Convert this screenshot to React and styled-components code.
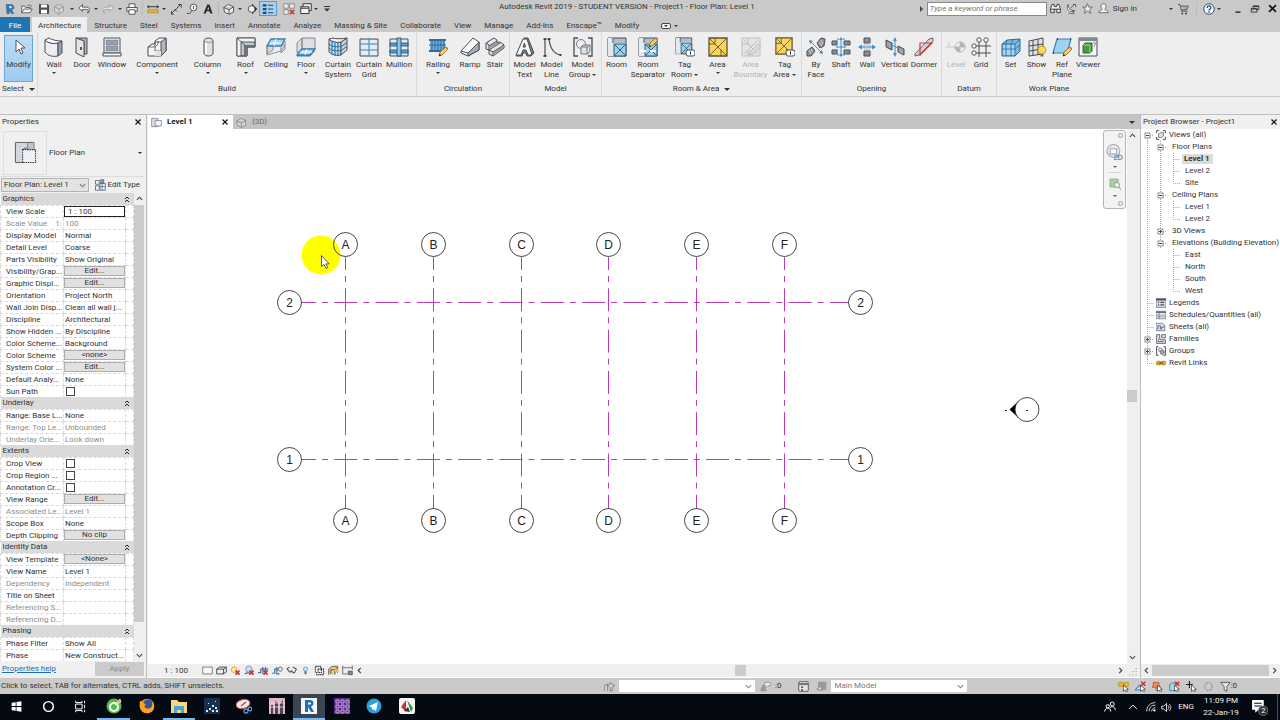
import React, { useState } from "react"
import styled, { createGlobalStyle } from "styled-components"

const GlobalStyle = createGlobalStyle`
  * {
    box-sizing: border-box;
  }
  body {
    margin: 0;
    background: #cacaca;
    color: #333;
    font-family: Roboto, "Open Sans", sans-serif;
    font-size: 8px;
    line-height: 10px;
  }
  button, input, select {
    font: inherit;
    color: inherit;
    margin: 0;
    padding: 0;
    border: 0;
    border-radius: 0;
    background: none;
    appearance: none;
    outline: none;
  }
  button {
    cursor: pointer;
  }
  svg {
    display: block;
    flex: none;
  }
`

const ink = "#4a4e55"
const blue = "#3b7fb5"
const sky = "#a8d4ee"
const gold = "#fbd45c"

/* ---------- icons ---------- */

const ribbonIcons = {
  modify: <path d="M7 3v12l3-3 2 5 2-1-2-5h4z" fill="#fff" stroke="#444" strokeWidth=".9" />,
  wall: (
    <>
      <path d="M1 3c3 3 8 4 13 3v13c-5 1-10 0-13-4z" fill="#eceef1" stroke={ink} />
      <path d="M1 3l4-2c3 2 8 3 13 3l-4 2c-5 1-10 0-13-3z" fill="#fff" stroke={ink} />
      <path d="M14 6l4-2v12l-4 3z" fill="#9ba1ab" stroke={ink} />
    </>
  ),
  door: (
    <>
      <path d="M4 1h11v16h-3V4z" fill="#aeb4bd" stroke={ink} />
      <path d="M4 1l8 3v16l-8-4z" fill="#e2e5ea" stroke={ink} />
      <path d="M9 10v3" stroke="#222" strokeWidth="1.500" />
    </>
  ),
  window: (
    <>
      <path d="M2 1h16v15H2z" fill="#f6f7f8" stroke={ink} />
      <path d="M4 3h5.500v5H4zM10.500 3H16v5h-5.500zM4 9h5.500v5H4zM10.500 9H16v5h-5.500z" fill="#98a1ad" stroke="#6e7681" strokeWidth=".6" />
      <path d="M1 16h18v3H1z" fill="#f6f7f8" stroke={ink} />
    </>
  ),
  component: (
    <>
      <path d="M1 10l4-3h3V4l4-3h7v13l-5 5H1z" fill="#f4f5f7" stroke={ink} />
      <path d="M14 5l5-4v13l-5 5z" fill="#b1b6be" stroke={ink} />
      <path d="M8 5h6M8 5v5M1 10h7l3-3M8 10v4h6M11 4v3" fill="none" stroke={ink} strokeWidth=".8" />
      <path d="M8 14h6v5H8z" fill="#dfe2e6" />
    </>
  ),
  column: (
    <>
      <path d="M6 4c0-4 9-4 9 0v12c0 4-9 4-9 0z" fill="#dde0e4" stroke={ink} />
      <path d="M8 5v12" stroke="#fff" strokeWidth="2" />
      <path d="M6.500 4c1 2 7 2 8 0" fill="none" stroke="#8e949d" />
    </>
  ),
  roof: (
    <>
      <path d="M1 1h18v9h-8v9H1z" fill="#c4c8ce" stroke={ink} />
      <path d="M1 1l4 4h14V1zM5 5v14H1V1z" fill="#f2f3f5" />
      <path d="M19 5H5v14M19 1H1v18h10v-9h8zM1 1l10 9" fill="none" stroke={ink} strokeWidth=".9" />
      <path d="M8 8h11v2h-8v9H8z" fill="#6c727c" />
    </>
  ),
  ceiling: (
    <>
      <path d="M1 8v9l6-4V8h12l-4 5v3l4-4V4z" fill="#d3d6db" stroke="#8b9098" />
      <path d="M5 2h14l-4 7H1z" fill={sky} stroke={blue} strokeWidth="1.300" />
      <path d="M4 6h12M10 2L8 9" stroke="#fff" />
      <path d="M1 9v9l14-4V9" fill="none" stroke="#8b9098" />
    </>
  ),
  floor: (
    <>
      <path d="M6 1h13v11H6zM1 6l5-5v11l-5 4z" fill="#dcdfe3" stroke="#858b94" />
      <path d="M6 12h13l-5 6H1z" fill={sky} stroke={blue} strokeWidth="1.300" />
      <path d="M4 15h12M11 12l-2 6" stroke="#fff" />
      <path d="M1 18h13l5-6v2l-5 5.500H1z" fill={blue} />
    </>
  ),
  curtainSystem: (
    <>
      <path d="M1 2c3 3 8 4 12 3v13c-4 1-9 0-12-3z" fill="#bfe0f3" stroke={ink} />
      <path d="M13 5l6-4v12l-6 5z" fill="#cfd3d9" stroke={ink} />
      <path d="M1 2l4-1c3 1 9 1 14 0l-6 4C9 6 4 5 1 2z" fill="#f2f3f5" stroke={ink} />
      <path d="M4 4.500v13M7 5.500V19M10 5.500V19M1 7c3 3 8 3 12 2.500l6-4M1 11c3 3 8 3 12 2.500l6-4" fill="none" stroke="#2d6796" />
    </>
  ),
  curtainGrid: (
    <>
      <path d="M1 2h18v17H1z" fill="#d7dadf" stroke={ink} />
      <path d="M2 3h7v3H2zM11 3h7v3h-7zM2 14h7v4H2zM11 14h7v4h-7zM2 8h7v4H2zM11 8h7v4h-7z" fill="#e9ebee" />
      <path d="M10 1v18M1 7h18M1 13h18" stroke="#3f94cf" />
    </>
  ),
  mullion: (
    <>
      <path d="M1 2h18v17H1z" fill="#e7e9ec" stroke={ink} />
      <path d="M1 6h18v3H1zM1 13h18v3H1z" fill="#56a0d3" stroke="#1f5278" strokeWidth=".8" />
      <path d="M8 1h4v18H8z" fill="#8ec3e8" stroke="#1f5278" strokeWidth=".9" />
    </>
  ),
  railing: (
    <>
      <path d="M1 2h17v2H1zM1 13h14v2H1z" fill="#2f6fa3" />
      <path d="M2 4h15v9H2z" fill="#6db1de" />
      <path d="M4 4v10M7 4v10M10 4v10M13 4v10M16 4v8M1 8h17" stroke="#2c6897" />
      <Pencil />
    </>
  ),
  ramp: (
    <>
      <path d="M1 14L13 1l6 4v8l-11 6-7-3z" fill="#f7f8f9" stroke={ink} />
      <path d="M19 5v8L8 19v-3z" fill="#a8aeb7" stroke={ink} />
      <path d="M1 14l7 2" stroke={ink} />
    </>
  ),
  stair: (
    <>
      <path d="M1 6l8-5 3 2v3l3-1 4 3v3L8 19l-4-2v-4l-3-1z" fill="#e3e5e9" stroke={ink} />
      <path d="M4 9l8-5M4 13l11-7M8 15l11-7M1 6l3 2v5l4 2v4" fill="none" stroke={ink} />
      <path d="M5 9l7-4v2L5 11zM9 15l9-6v2l-9 6z" fill="#8c939e" />
    </>
  ),
  modelText: (
    <>
      <path d="M9 1h4l6 15-3 3h-4l-1-3H8l-1 3H1z" fill="#7a808b" stroke={ink} />
      <path d="M8 2h4l5 16h-4l-2-5H8l-2 5H1z" fill="#f5f6f7" stroke={ink} />
      <path d="M8 10l1.500-4 1 4z" fill="#7a808b" stroke={ink} />
    </>
  ),
  modelLine: (
    <>
      <path d="M3 2v17M7 2c1 9 5 15 12 16" fill="none" stroke={ink} strokeWidth="1.200" />
      <path d="M1.500 2h3M1.500 19h3M5.500 2h3M17.500 18h2" stroke="#222" strokeWidth="1.500" />
    </>
  ),
  modelGroup: (
    <>
      <path d="M5 1H1v18h4M15 1h4v18h-4" fill="none" stroke={ink} strokeWidth="1.300" />
      <circle cx="8" cy="7" r="4.500" fill="#eef0f2" stroke="#737983" />
      <path d="M8 10l2-2h7v6l-2 3H8z" fill="#dfe2e6" stroke="#737983" />
      <path d="M8 10h6v7M14 10l3-2" fill="none" stroke="#737983" />
    </>
  ),
  room: <RoomBase />,
  roomSeparator: (
    <>
      <RoomBase />
      <path d="M2 14h6M12 14h6" stroke="#fff" strokeWidth="2" />
      <g transform="translate(0 -9)">
        <Pencil />
      </g>
    </>
  ),
  tagRoom: (
    <>
      <g transform="scale(.88)">
        <RoomBase />
      </g>
      <Tag />
    </>
  ),
  area: <AreaBase />,
  areaBoundary: (
    <g opacity=".55">
      <path d="M1 1h18v18H1z" fill="#dcdcdc" stroke="#999" />
      <path d="M3 3l14 14M17 3L3 17M7 1v6H1M7 13v6" fill="none" stroke="#999" />
      <path d="M9 15l8-8 3 2-8 8-4 1z" fill="#ccc" stroke="#999" />
    </g>
  ),
  tagArea: (
    <>
      <g transform="scale(.9)">
        <AreaBase />
      </g>
      <Tag />
    </>
  ),
  byFace: (
    <>
      <path d="M11 6l4-5 4 1-1 7-4 2zM1 14l5-4 3 4-4 5H1z" fill="#8a8f98" stroke={ink} />
      <path d="M13 5l3 4M15 3l2 4M3 13l2 4M5 12l2 3" stroke="#d5d8dd" />
      <path d="M4 4l12 12" stroke="#3f8fd0" />
      <path d="M3 3l4 1-3 3zM17 17l-4-1 3-3z" fill="#3f8fd0" />
    </>
  ),
  shaft: (
    <>
      <path d="M1 4h5v4H1zM13 4h6v4h-6zM1 13h5v4H1zM13 13h6v4h-6z" fill="#8a8f98" stroke={ink} />
      <path d="M6 10h8M10 1v18" stroke="#3f8fd0" />
      <path d="M6 2h8v16H6z" fill="none" stroke="#3f8fd0" strokeDasharray="2 1" />
      <path d="M10 0l2 3H8zM10 20l2-3H8z" fill="#3f8fd0" />
    </>
  ),
  wallOpening: (
    <>
      <path d="M7 1h6v5H7zM7 14h6v5H7z" fill="#8a8f98" stroke={ink} />
      <path d="M7 8h6v4H7z" fill="#e9ebee" stroke="#aaa" strokeWidth=".6" />
      <path d="M3 10h14" stroke="#3f8fd0" />
      <path d="M1 10l4-2.500v5zM19 10l-4-2.500v5z" fill="#3f8fd0" />
    </>
  ),
  vertical: (
    <>
      <path d="M1 3l6 3v7l-6-3zM13 9l6 3v6l-6-3z" fill="#8a8f98" stroke={ink} />
      <path d="M3 5v5M5 6v5M15 11v5M17 12v5" stroke="#c7cad0" strokeWidth=".7" />
      <path d="M10 3v14M7 8l6 3" stroke="#3f8fd0" />
      <path d="M10 0l2 4H8zM10 20l2-4H8z" fill="#3f8fd0" />
    </>
  ),
  dormer: (
    <>
      <path d="M1 17L15 2l4-1v3L5 18l-4 1z" fill="#d0d3d8" stroke={ink} strokeWidth=".8" />
      <path d="M6 19V6h12L6 18" fill="none" stroke="#cc3b3b" strokeWidth="1.200" />
    </>
  ),
  level: (
    <g opacity=".5">
      <circle cx="14" cy="10" r="5" fill="#eee" stroke="#888" />
      <path d="M14 10V5a5 5 0 0 1 5 5zM14 10v5a5 5 0 0 1-5-5z" fill="#777" />
      <path d="M0 10h20M14 4v12M3 9V5" stroke="#888" strokeWidth=".8" />
    </g>
  ),
  grid: (
    <>
      <path d="M8 5v15M15 5v15M5 9h15M5 16h15" stroke={ink} />
      <g fill="#fff" stroke={ink}>
        <circle cx="8" cy="3" r="2.200" />
        <circle cx="15" cy="3" r="2.200" />
        <circle cx="3" cy="9" r="2.200" />
        <circle cx="3" cy="16" r="2.200" />
      </g>
    </>
  ),
  set: (
    <>
      <path d="M1 7l5-4 13-1v12l-5 5H1z" fill="#7db8e0" stroke="#23699d" />
      <path d="M2 8h12v10H2z" fill="#a9d4f0" />
      <path d="M1 7h13l5-5M1 12h13l5-4M5 7v12M10 7v12M14 7v12M6 3l-1 4M12 3l-2 4" fill="none" stroke="#23699d" strokeWidth=".8" />
    </>
  ),
  show: (
    <>
      <path d="M2 4l14-3v16L2 19z" fill="#dfe2e6" stroke={ink} />
      <path d="M6 3v16M11 2v16M2 9l14-2M2 14l14-2" stroke={ink} />
      <circle cx="15" cy="13" r="4" fill="#fbd84e" stroke="#b98c14" strokeWidth=".7" />
      <path d="M13.500 17h3v2.500h-3z" fill="#6d7178" />
    </>
  ),
  refPlane: (
    <>
      <path d="M5 2h14l-4 14H1z" fill="#a3d2f0" stroke={blue} strokeWidth="1.200" />
      <path d="M5 2h1M18 2h1M1 16h1" stroke="#1c4f78" strokeWidth="2" />
      <Pencil />
    </>
  ),
  viewer: (
    <>
      <path d="M1 1h18v18H1z" fill="#f5f6f7" stroke={ink} />
      <path d="M1 1h18v3H1z" fill="#838993" />
      <path d="M5 8l2-2h7v8l-2 2H5z" fill="#4f9a45" stroke="#2e6b27" />
      <path d="M5 8h7v8" fill="none" stroke="#9fd193" />
      <path d="M16 3v4M18 5l-2 5" stroke="#999" />
    </>
  ),
}

function Pencil() {
  return (
    <>
      <path d="M11 19l1-4 6-5 2 2-6 6z" fill={gold} stroke="#8c5a14" strokeWidth=".8" />
      <path d="M11 19l.6-2.200 1.600 1.400z" fill="#222" />
      <path d="M17 10.500l1-1 2.500 2-1 1z" fill="#d9665c" />
    </>
  )
}

function RoomBase() {
  return (
    <>
      <path d="M1 1h18v18H1z" fill="#b9bec6" stroke={ink} />
      <path d="M1 1h5v5h13v1H7v12H1z" fill="#e6e8eb" />
      <path d="M7 7h12v12H7z" fill="#9ed0ec" stroke="#315d7c" />
      <path d="M7 7l12 12M19 7L7 19M6 1v5" stroke="#315d7c" />
    </>
  )
}

function AreaBase() {
  return (
    <>
      <path d="M1 1h18v18H1z" fill={gold} stroke="#5d5230" strokeWidth="1.300" />
      <path d="M1 1l18 18M19 1L1 19M7 1v6H1M13 19v-6" fill="none" stroke="#5d5230" strokeWidth=".9" />
    </>
  )
}

function Tag() {
  return (
    <>
      <rect x="11" y="13" width="9" height="6" rx="2" fill="#fff" stroke={ink} />
      <path d="M15.500 14.500v3" stroke="#222" />
    </>
  )
}

const smallIcons = {
  logo: (
    <>
      <path d="M3 2h6c6 0 5 7 1 7l3 5h-3L7 9v5H4z" fill="#2e7dba" stroke="#1b5688" strokeWidth=".7" />
      <path d="M7 4h2c2 0 2 3 0 3H7z" fill="#d9e9f5" />
    </>
  ),
  open: <path d="M1 13V4h4l1 2h6v2M1 13l3-5h11l-3 5zM9 3h4l1 2" fill="#f2f2f2" stroke="#444" />,
  save: (
    <>
      <path d="M2 2h11l1 1v11H2z" fill="#4d5259" stroke="#333" />
      <path d="M4 2h8v4H4zM4 9h8v5H4z" fill="#fff" />
    </>
  ),
  sync: <path d="M2 5l6-3 6 3v6l-6 4-6-4zM2 5l6 3 6-3M8 8v7" fill="#d6d6d6" stroke="#8c8c8c" />,
  undo: <path d="M6 2L1 7l5 4V8.500h5c3 0 3 2 2 5 4-4 2-8-2-8H6z" fill="#fff" stroke="#333" />,
  redo: <path d="M10 2l5 5-5 4V8.500H5c-3 0-3 2-2 5-4-4-2-8 2-8h5z" fill="#e4e4e4" stroke="#999" />,
  print: (
    <>
      <path d="M4 6V1h8v5M4 11H1V6h14v5h-3" fill="#f2f2f2" stroke="#333" />
      <path d="M4 9h8v6H4z" fill="#fff" stroke="#333" />
    </>
  ),
  measure: (
    <>
      <path d="M0 5h16M3 3L1 5l2 2M13 3l2 2-2 2" fill="none" stroke="#333" strokeWidth="1.300" />
      <path d="M1 9h14v4H1z" fill="#e3b23a" stroke="#8a6a17" strokeWidth=".6" />
    </>
  ),
  dimension: <path d="M2 14L14 2M2 11v4h3M11 2h4v4M6 8l3 3" fill="none" stroke="#333" strokeWidth="1.200" />,
  tag: (
    <>
      <circle cx="10" cy="6" r="4.500" fill="#eee" stroke="#333" />
      <path d="M1 14h4l3-4M10 4v4" fill="none" stroke="#333" />
    </>
  ),
  text: <path d="M2 14L7 2h3l4 12h-3l-1-3H6l-1 3zM7 9h2.500L8.500 5z" fill="#2b2b2b" fillRule="evenodd" />,
  house: <path d="M1 6l6-4 7 3v7l-6 3-6-3zM1 6l7 3 6-4M8 9v6" fill="#eee" stroke="#333" />,
  houseGrey: <path d="M1 6l6-4 7 3v7l-6 3-6-3zM1 6l7 3 6-4M8 9v6" fill="#d8d8d8" stroke="#777" />,
  section: (
    <>
      <path d="M8 1l7 7-7 7z" fill="#222" />
      <circle cx="7.500" cy="8" r="4.500" fill="#eee" stroke="#333" />
    </>
  ),
  thin: (
    <>
      <path d="M1 3h5M1 8h5M1 13h5" stroke="#1c4d74" strokeWidth="3" />
      <path d="M8 3h7M8 8h7M8 13h7" stroke="#1c4d74" strokeWidth="1.500" />
    </>
  ),
  closeViews: (
    <>
      <path d="M1 1h6v6H1zM9 1h6v6H9zM1 9h6v6H1z" fill="#ececec" stroke="#777" />
      <path d="M9 9l6 6M15 9l-6 6" stroke="#c22f2f" strokeWidth="2" />
    </>
  ),
  switchViews: <path d="M4 5V1h11v9h-3M1 5h11v9H1zM1 7h11" fill="#f3f3f3" stroke="#333" strokeWidth="1.300" />,
  binoculars: (
    <path d="M1 14V8l2-6h3v3h4V2h3l2 6v6h-5V9H6v5zM1 9h5M10 9h5" fill="#eee" stroke="#333" strokeWidth="1.300" />
  ),
  satellite: <path d="M3 2c0 6 4 9 10 9-3 3-10 2-11-3-.5-2 0-4 1-6zM7 7l6-5M4 15h8l-3-4M10 2h4v4" fill="#eee" stroke="#333" />,
  star: <path d="M8 1l2 5h5l-4 3.500L12.500 15 8 11.500 3.500 15 5 9.500 1 6h5z" fill="#eee" stroke="#444" />,
  user: <path d="M8 1c5 0 4 6 2 8 0 2 5 1 5 5H1c0-4 5-3 5-5C4 7 3 1 8 1z" fill="#f2f2f2" stroke="#444" />,
  cart: (
    <>
      <path d="M1 2h3l2 9h8M4.500 4H15l-2 5H6" fill="#aab" stroke="#445" />
      <circle cx="7" cy="14" r="1.300" fill="#445" />
      <circle cx="12" cy="14" r="1.300" fill="#445" />
    </>
  ),
  help: (
    <>
      <circle cx="8" cy="8" r="7" fill="#f4f6f9" stroke="#2d4f78" strokeWidth="1.300" />
      <path d="M5.500 6.500c0-4 5.500-3 5 0-.3 1.500-2.500 1.500-2.500 3.500M8 11v2" fill="none" stroke="#2d4f78" strokeWidth="1.800" />
    </>
  ),
  minimize: <path d="M4 13h8" stroke="#111" strokeWidth="2" />,
  restore: <path d="M5 6V3h9v6h-3M2 7h9v6H2zM2 8h9M5 4h9" fill="none" stroke="#222" strokeWidth="1.300" />,
  close: <path d="M3 3l10 10M13 3L3 13" stroke="#1a1a1a" strokeWidth="2.600" />,
  plan: (
    <>
      <path d="M1 2h9v12H1z" fill="#dfe3ea" stroke="#67707d" />
      <path d="M6 5h9v8H6z" fill="#f2f4f7" stroke="#67707d" />
    </>
  ),
  planBig: (
    <>
      <path d="M1 1h12v4H7v10H1z" fill="#d2d6dd" stroke="#4b5058" strokeWidth=".6" />
      <path d="M9.500 1H14v5H9.500z" fill="#bfc4cc" stroke="#4b5058" strokeWidth=".4" />
      <path d="M6 6h9v9H6z" fill="#eef0f3" stroke="#333" strokeWidth=".7" strokeDasharray="1 .6" />
    </>
  ),
  editType: (
    <>
      <path d="M2 2h5v5H2zM2 9h5v6H2zM8 6h7v9H8z" fill="#f1f3f5" stroke="#4d545e" />
      <path d="M9 1h4v4H9z" fill="#7fb3d8" stroke="#4d545e" />
      <path d="M8 10h7M11 6v9" stroke="#3c79a8" />
    </>
  ),
  views: (
    <>
      <path d="M1 5V1h4M11 1h4v4M15 11v4h-4M5 15H1v-4" fill="none" stroke="#444" strokeWidth="1.500" />
      <path d="M4 6l4-2h4v6l-3 2H4z" fill="#ddd" stroke="#555" />
    </>
  ),
  legends: (
    <>
      <path d="M0 1h16v14H0z" fill="#d9dbe3" stroke="#4d5360" />
      <path d="M0 1h16v3H0z" fill="#4d5360" />
      <path d="M3 7h2M7 7h6M3 11h2M7 11h6" stroke="#4d5360" strokeWidth="2" />
    </>
  ),
  schedules: (
    <>
      <path d="M0 2h16v12H0z" fill="#fff" stroke="#4d5360" />
      <path d="M0 2h16v3H0z" fill="#6b707c" />
      <path d="M0 8h16M0 11h16M5 5v9" stroke="#4d5360" />
    </>
  ),
  sheets: (
    <>
      <path d="M0 2h10l4 3v9H0z" fill="#dfe1ea" stroke="#4d5360" />
      <path d="M3 12V6h4v6M9 12V8h5" fill="none" stroke="#5d6d96" strokeWidth="1.500" />
    </>
  ),
  families: <path d="M1 1h5v8h9v6H1zM9 1h6v5H9zM4 9v3h8" fill="#dde0e8" stroke="#4a5161" strokeWidth="1.300" />,
  groups: (
    <>
      <path d="M4 1H1v14h3M12 1h3v14h-3" fill="none" stroke="#444" strokeWidth="1.500" />
      <circle cx="7" cy="6" r="3" fill="#dde0e8" stroke="#4a5161" />
      <path d="M7 8l3-2 3 2v4l-3 2-3-2z" fill="#9fa7bd" stroke="#4a5161" />
    </>
  ),
  links: (
    <>
      <rect x="0" y="5" width="8" height="6" rx="3" fill="#e7b43a" stroke="#94690c" />
      <rect x="8" y="5" width="8" height="6" rx="3" fill="#e7b43a" stroke="#94690c" />
      <path d="M4 8h8" stroke="#5d430b" strokeWidth="1.500" />
    </>
  ),
  detail: <path d="M1 3h14v10H1z" fill="#f7f7f7" stroke="#555" />,
  cube: <path d="M1 6l4-3h10v7l-4 3H1zM1 6h10v7M11 6l4-3" fill="#eee" stroke="#333" strokeWidth="1.200" />,
  sun: (
    <>
      <circle cx="6" cy="7" r="4" fill="#ffe9a5" stroke="#d9941b" strokeWidth="1.500" strokeDasharray="2 1" />
      <RedX />
    </>
  ),
  shadow: (
    <>
      <circle cx="7" cy="6" r="4.500" fill="#cfe4f3" stroke="#477a9f" />
      <path d="M1 13c3-2 6-2 9 0" fill="none" stroke="#477a9f" strokeWidth="2" />
      <RedX />
    </>
  ),
  crop: (
    <>
      <path d="M0 11h4V6h11M7 3v10M11 3v8" fill="none" stroke="#4378a5" strokeWidth="1.800" />
      <RedX />
    </>
  ),
  cropRegion: (
    <>
      <path d="M0 12h4V6h5M7 3v10h4" fill="none" stroke="#4378a5" strokeWidth="1.800" />
      <circle cx="12" cy="6" r="3" fill="#e9f4fb" stroke="#333" />
    </>
  ),
  glasses: <path d="M1 5l4 5c2 1 3-1 3-2 1 3 4 5 5 2l2-4-5-3M5 3L2 5" fill="none" stroke="#4a4a4a" strokeWidth="1.500" />,
  bulb: (
    <>
      <circle cx="8" cy="6" r="3" fill="#cfe9fa" stroke="#3b86bd" />
      <path d="M6.500 9h3v3l-1.500 2-1.500-2z" fill="#4e7795" />
    </>
  ),
  temp: <path d="M2 2h8v4h4v8H4v-3H2zM6 6h5v5H6z" fill="#eee" stroke="#333" strokeWidth="1.500" strokeDasharray="2 1" />,
  analytic: (
    <>
      <path d="M1 14V6l5-4h8v9M4 13V7h6v7M10 7l4-4" fill="#e6c9a1" stroke="#554" strokeWidth="1.300" />
      <circle cx="12" cy="8" r="3" fill="#f6b73c" />
    </>
  ),
  constraints: (
    <>
      <path d="M1 1v12M15 1v6M1 4h14M1 13h7" stroke="#666" strokeWidth="1.300" fill="none" />
      <path d="M9 9h6v5H9z" fill="#888" stroke="#444" />
    </>
  ),
  worksets: <path d="M1 14V7l4-2v9M5 9l4-6 6 4-3 2v5H9V8" fill="#ddd" stroke="#888" strokeWidth="1.500" />,
  editable: (
    <>
      <path d="M7 2h8v5h-4l-3 3V7H7z" fill="#eee" stroke="#888" />
      <path d="M1 14l2-5h3l3 5z" fill="#999" stroke="#888" />
      <circle cx="5" cy="7" r="2" fill="#999" />
    </>
  ),
  options: (
    <>
      <rect x="1" y="1" width="14" height="14" rx="2" fill="#e3e3e3" stroke="#555" strokeWidth="1.300" />
      <path d="M1 3h14v3H1z" fill="#777" />
      <path d="M6 8v2M6 12v2" stroke="#111" strokeWidth="2" />
    </>
  ),
  addOption: (
    <>
      <path d="M3 1h12v12H3z" fill="#9a9a9a" />
      <path d="M1 12l6-5 2 7z" fill="#d5d5d5" stroke="#777" />
    </>
  ),
  selLinks: (
    <>
      <rect x="0" y="2" width="8" height="6" rx="3" fill="#e8b62f" stroke="#b5850f" />
      <rect x="8" y="2" width="8" height="6" rx="3" fill="#e8b62f" stroke="#b5850f" />
      <Pointer />
    </>
  ),
  selUnderlay: (
    <>
      <path d="M0 13l7-7 4 7z" fill="#cfe4f3" stroke="#3b7fb5" strokeWidth="1.500" />
      <path d="M9 1l6 6M15 1L9 7" stroke="#cc2b2b" strokeWidth="2" />
      <Pointer />
    </>
  ),
  selPinned: (
    <>
      <path d="M2 2h8v3l2 4H0l2-4zM6 9v5" fill="#ef8f5d" stroke="#b5552a" strokeWidth="1.300" />
      <Pointer />
    </>
  ),
  selFace: (
    <>
      <path d="M1 5l3-2h6v11H1z" fill="#a8d4ee" stroke="#3b7fb5" strokeWidth="1.300" />
      <path d="M9 1l6 6M15 1L9 7" stroke="#cc2b2b" strokeWidth="2" />
      <Pointer />
    </>
  ),
  drag: (
    <>
      <path d="M5 0v10M0 5h10" stroke="#222" strokeWidth="1.600" />
      <Pointer />
    </>
  ),
  ring: <circle cx="8" cy="8" r="5.500" fill="none" stroke="#a5a5a5" strokeWidth="2.500" strokeDasharray="3 1.300" />,
  filter: <path d="M1 2h14L10 8v7l-4-2V8z" fill="#e8ebee" stroke="#3e444c" strokeWidth="1.200" />,
  grip: <path d="M13 3v2M13 8v2M13 13v2M8 8v2M8 13v2M3 13v2" stroke="#aaa" strokeWidth="2" />,
}

function RedX() {
  return <path d="M8 8l6 6M14 8l-6 6" stroke="#c62f2f" strokeWidth="2.400" />
}

function Pointer() {
  return <path d="M8 6v9l2-2 2 3 2-1-2-3h3z" fill="#fff" stroke="#333" />
}

const Icon = ({ name, size = 11 }) => (
  <svg width={size} height={size} viewBox="0 0 16 16" aria-hidden="true">
    {smallIcons[name]}
  </svg>
)

const Caret = styled.span`
  width: 0;
  height: 0;
  margin-right: ${(p) => p.$after || 0}px;
  border: ${(p) => p.$size || 2}px solid transparent;
  border-top-color: #333;
  border-bottom-width: 0;
`

const Chevron = ({ dir = "down", color = "#444" }) => {
  const d = {
    down: "M1 2.500l3 3 3-3",
    up: "M1 5.500l3-3 3 3",
    left: "M5.500 1l-3 3 3 3",
    right: "M2.500 1l3 3-3 3",
  }[dir]
  return (
    <svg width="7" height="7" viewBox="0 0 8 8" aria-hidden="true">
      <path d={d} fill="none" stroke={color} strokeWidth="1.300" />
    </svg>
  )
}

/* ---------- shell ---------- */

const Shell = styled.div`
  min-height: 100vh;
  display: flex;
  flex-direction: column;
`

const TitleBar = styled.header`
  display: grid;
  grid-template-columns: auto 1fr auto;
  align-items: center;
  height: 17px;
  background: #c9c9c9;
`
const QuickAccess = styled.div`
  display: flex;
  align-items: center;
  padding-left: 2px;
`
const QuickButton = styled.button`
  display: flex;
  align-items: center;
  justify-content: center;
  width: ${(p) => p.$w || 16}px;
  height: 15px;
  background: ${(p) => (p.$on ? "#a9d0ef" : "none")};
  box-shadow: ${(p) => (p.$on ? "inset 0 0 0 1px #5b9bd0" : "none")};
`
const Rule = styled.span`
  width: 1px;
  height: 13px;
  margin: 0 3px;
  background: #bababa;
`
const DocTitle = styled.h1`
  margin: 0;
  padding-bottom: 4px;
  font-size: 8px;
  font-weight: 400;
  text-align: center;
  white-space: nowrap;
`
const Account = styled.div`
  display: flex;
  align-items: center;
  justify-content: flex-end;
`
const Search = styled.input`
  width: 120px;
  height: 14px;
  margin: 0 1px 0 4px;
  padding: 0 2px;
  border: 1px solid #8a8a8a;
  background: #fff;
  font-style: italic;
  &::placeholder {
    color: #777;
    opacity: 1;
  }
`
const SideCaret = styled.span`
  border: 3px solid transparent;
  border-left-color: #444;
  border-right-width: 0;
`
const SignIn = styled.a`
  margin-left: 1px;
  padding-right: 32px;
  color: inherit;
  text-decoration: none;
`

const Tabs = styled.nav`
  display: flex;
  gap: 1px;
  height: 15px;
  background: #c9c9c9;
`
const Tab = styled.button`
  display: flex;
  align-items: center;
  padding: 2px 6px 0;
  background: ${(p) => (p.$active ? "#eeeeee" : "none")};
`
const FileTab = styled(Tab)`
  width: 30px;
  justify-content: center;
  margin-right: 1px;
  background: #1f76b4;
  color: #fff;
`
const TabPill = styled.span`
  display: flex;
  align-items: center;
  justify-content: center;
  width: 10px;
  height: 6px;
  margin: 0 3px 0 9px;
  border: 1px solid #444;
  border-radius: 2px;
  background: #f3f3f3;
`

const Ribbon = styled.section`
  display: flex;
  height: 65px;
  background: #eeeeee;
  border-bottom: 1px solid #c8c8c8;
`
const Panel = styled.div`
  display: flex;
  flex-direction: column;
  justify-content: space-between;
  padding: 3px 0 1px;
  border-right: 1px solid ${(p) => (p.$last ? "transparent" : "#dadada")};
`
const PanelTools = styled.div`
  display: flex;
  padding: 0 ${(p) => p.$pad ?? 2}px;
`
const PanelTitle = styled.div`
  display: flex;
  align-items: center;
  justify-content: center;
  gap: 5px;
  height: 12px;
`
const ToolButton = styled.button`
  display: flex;
  flex-direction: column;
  align-items: center;
  width: ${(p) => p.$w}px;
  height: 47px;
  padding-top: 2px;
  line-height: 10px;
  color: ${(p) => (p.$disabled ? "#b4b4b4" : "inherit")};
  background: ${(p) => (p.$active ? "linear-gradient(#bddcf5, #9fcaef)" : "none")};
  box-shadow: ${(p) => (p.$active ? "inset 0 0 0 1px #6ba5d6" : "none")};
  svg {
    margin-bottom: 3px;
  }
`
const ToolLabel = styled.span`
  white-space: nowrap;
`
const SecondLine = styled.span`
  display: flex;
  align-items: center;
  gap: 2px;
  min-height: 6px;
  white-space: nowrap;
`

const OptionsBar = styled.div`
  height: 18px;
  background: #eeeeee;
  border-bottom: 1px solid #c0c0c0;
`

const Workspace = styled.main`
  flex: 1;
  display: grid;
  grid-template-columns: 147px minmax(0, 1fr) 140px;
  min-height: 0;
  background: #f0f0f0;
`

/* ---------- properties ---------- */

const Side = styled.aside`
  display: flex;
  flex-direction: column;
  min-height: 0;
  padding-right: 2px;
  border-right: 1px solid #bdbdbd;
`
const SideHeader = styled.div`
  display: flex;
  align-items: center;
  justify-content: space-between;
  height: 14px;
  padding: 0 1px 0 2px;
  background: #f0f0f0;
`
const IconButton = styled.button`
  display: flex;
  align-items: center;
  justify-content: center;
  width: ${(p) => p.$w || 10}px;
  height: ${(p) => p.$h || 10}px;
`
const TypeRow = styled.div`
  display: flex;
  align-items: center;
  height: 48px;
  padding: 0 2px 0 3px;
  border-bottom: 1px solid #dcdcdc;
`
const TypeThumb = styled.div`
  display: grid;
  place-items: center;
  width: 44px;
  height: 44px;
  margin-right: 2px;
  border: 1px solid #dedede;
`
const TypeName = styled.span`
  flex: 1;
`
const InstanceRow = styled.div`
  display: flex;
  align-items: center;
  justify-content: space-between;
  height: 16px;
  padding-left: 1px;
`
const Field = styled.label`
  display: flex;
  align-items: center;
  width: ${(p) => p.$w}px;
  height: ${(p) => p.$h || 14}px;
  padding-right: 2px;
  border: 1px solid ${(p) => p.$line || "#b5b5b5"};
  background: ${(p) => p.$bg || "#e3e3e3"};
  color: ${(p) => (p.$muted ? "#7a7a7a" : "inherit")};
  select {
    flex: 1;
    min-width: 0;
    padding-left: 2px;
  }
`
const EditType = styled.button`
  display: flex;
  align-items: center;
  gap: 2px;
  padding-right: 4px;
`
const PropsBody = styled.div`
  flex: 1 1 0;
  display: flex;
  justify-content: space-between;
  min-height: 0;
  overflow: hidden;
`
const PropsTable = styled.table`
  align-self: flex-start;
  width: 133px;
  table-layout: fixed;
  border-collapse: collapse;
  background: #fff;
`
const Col = styled.col`
  width: ${(p) => p.$w}px;
`
const Row = styled.tr`
  height: 12px;
  color: ${(p) => (p.$dim ? "#8d8d8d" : "inherit")};
`
const cell = `
  height: 12px;
  padding: 0;
  border: 1px dashed #dadada;
  line-height: 11px;
  text-align: left;
  font-weight: 400;
  overflow: hidden;
  text-overflow: clip;
`
const NameCell = styled.th`
  ${cell}
  padding-left: 5px;
  white-space: pre;
`
const ValueCell = styled.td`
  ${cell}
  padding-left: ${(p) => (p.$flush ? 0 : 1)}px;
  white-space: nowrap;
`
const GroupCell = styled.th`
  height: 12px;
  padding: 0 4px 0 2px;
  background: #dadada;
  font-weight: 400;
  text-align: left;
`
const GroupLine = styled.div`
  display: flex;
  align-items: center;
  justify-content: space-between;
  height: 11px;
`
const CellButton = styled.button`
  display: block;
  width: 100%;
  height: 10px;
  border: 1px solid #adadad;
  background: #e1e1e1;
  line-height: 8px;
`
const CellSelect = styled.select`
  display: block;
  width: 100%;
  height: 11px;
  padding-left: 3px;
  border: 1px solid #222;
  background: #fff;
  line-height: 9px;
`
const Check = styled.input`
  display: block;
  width: 9px;
  height: 9px;
  margin-left: 1px;
  border: 1px solid #444;
  background: #fff;
  &:checked {
    background: #1f76b4;
  }
`
const SideFooter = styled.div`
  display: flex;
  align-items: center;
  justify-content: space-between;
  height: 17px;
  padding: 0 0 2px 2px;
`
const HelpLink = styled.a`
  color: #1c6cb8;
`
const Apply = styled.button`
  width: 49px;
  height: 14px;
  background: #cbcbcb;
  color: #8a8a8a;
`

const VScroll = styled.div`
  display: flex;
  flex-direction: column;
  align-items: center;
  width: ${(p) => p.$w || 10}px;
  padding: ${(p) => p.$pad || 2}px 0;
  background: #efefef;
`
const HScroll = styled.div`
  display: flex;
  align-items: center;
  flex: 1;
  height: 11px;
  padding: 0 2px;
  background: #efefef;
`
const Gap = styled.span`
  flex: ${(p) => p.$grow};
`
const Thumb = styled.span`
  flex: ${(p) => p.$grow};
  align-self: stretch;
  background: #cbcbcb;
`

/* ---------- view ---------- */

const View = styled.section`
  display: flex;
  flex-direction: column;
  min-width: 0;
  padding-left: 1px;
`
const ViewTabs = styled.div`
  display: flex;
  align-items: center;
  height: 14px;
  background: #c4c4c4;
`
const ViewTab = styled.div`
  display: flex;
  align-items: center;
  gap: 5px;
  width: ${(p) => p.$w}px;
  height: 14px;
  padding: 0 3px;
  background: ${(p) => (p.$active ? "#fff" : "none")};
  color: ${(p) => (p.$active ? "#222" : "#6a6a6a")};
  font-weight: ${(p) => (p.$active ? 700 : 400)};
`
const TabName = styled.button`
  flex: 1;
  text-align: left;
`
const MenuCaret = styled.button`
  display: flex;
  margin-left: auto;
  padding: 3px 5px;
`
const ViewBody = styled.div`
  flex: 1;
  display: flex;
  min-height: 0;
  background: #fff;
`
const Canvas = styled.div`
  position: relative;
  flex: 1;
  min-width: 0;
`
const PlanSvg = styled.svg`
  width: 100%;
  height: 100%;
  font-family: "Liberation Sans", sans-serif;
`
const NavBar = styled.div`
  position: absolute;
  top: 1px;
  right: 1px;
  display: flex;
  flex-direction: column;
  align-items: center;
  width: 23px;
  height: 79px;
  padding: 2px 0;
  border: 1px solid #b5b5b5;
  border-radius: 3px;
  background: #f3f3f3;
`
const NavDot = styled.button`
  align-self: flex-end;
  width: 5px;
  height: 5px;
  margin-right: 2px;
  border: 1px solid #999;
  border-radius: 50%;
`
const NavButton = styled.button`
  display: flex;
  flex-direction: column;
  align-items: center;
  justify-content: space-between;
  flex: ${(p) => p.$grow};
  padding: 5px 0 4px;
  opacity: 0.75;
  & + & {
    border-top: 1px solid #ccc;
  }
`
const ControlBar = styled.div`
  display: flex;
  align-items: center;
  height: 14px;
  background: #efefef;
  border-bottom: 1px solid #fff;
`
const ScaleButton = styled.button`
  width: 34px;
  margin: 0 7px 0 11px;
`

/* ---------- browser ---------- */

const Browser = styled.aside`
  display: flex;
  flex-direction: column;
  min-width: 0;
  border-left: 1px solid #bdbdbd;
  background: #fff;
`
const Tree = styled.ul`
  flex: 1;
  margin: 0;
  padding: 0;
  list-style: none;
`
const TreeRow = styled.li`
  display: flex;
  align-items: center;
  height: 12px;
  white-space: nowrap;
`
const TreeLabel = styled.span`
  margin-left: ${(p) => (p.$icon ? 0 : p.$bold ? 2 : 3)}px;
  padding: 0 ${(p) => (p.$bold ? 3 : 0)}px 0 2px;
  font-weight: ${(p) => (p.$bold ? 700 : 400)};
  background: ${(p) => (p.$bold ? "#dcdcdc" : "none")};
`
const TreeIcon = styled.span`
  width: 13px;
  display: flex;
  justify-content: center;
`

/* ---------- status and taskbar ---------- */

const StatusBar = styled.footer`
  display: grid;
  grid-template-columns: 598px 1fr auto;
  align-items: center;
  height: 16px;
  padding-left: 1px;
  background: #cacaca;
`
const StatusGroup = styled.div`
  display: flex;
  align-items: center;
  gap: ${(p) => p.$gap || 0}px;
  padding-right: ${(p) => p.$end || 0}px;
`
const Count = styled.span`
  margin-right: 15px;
`
const TaskBar = styled.nav`
  display: flex;
  justify-content: space-between;
  height: 26px;
  background: #050a12;
  color: #f2f2f2;
`
const Apps = styled.div`
  display: flex;
`
const AppButton = styled.button`
  display: grid;
  place-items: center;
  width: ${(p) => p.$w || 33}px;
  height: 26px;
  background: ${(p) => (p.$on ? "#3b4552" : "none")};
  border-bottom: 2px solid ${(p) => (p.$run ? "#76b9ed" : "transparent")};
`
const Tray = styled.div`
  display: flex;
  align-items: center;
`
const TrayButton = styled.button`
  display: grid;
  place-items: center;
  width: ${(p) => p.$w}px;
  height: 26px;
`
const Clock = styled.time`
  width: 46px;
  text-align: center;
  line-height: 12px;
`
const Peek = styled.span`
  width: 1px;
  height: 26px;
  margin: 0 2px 0 3px;
  background: #4b5058;
`

/* ---------- data ---------- */

const quick = [
  ["logo", "Revit", 15],
  ["open", "Open", 19],
  ["save", "Save", 15],
  ["sync", "Synchronize", 16, true],
  ["undo", "Undo", 15, true],
  ["redo", "Redo", 15, true],
  ["print", "Print", 15],
  null,
  ["measure", "Measure", 13, true],
  ["dimension", "Aligned Dimension", 16],
  ["tag", "Tag by Category", 16],
  ["text", "Text", 15],
  null,
  ["house", "Default 3D View", 13, true],
  ["section", "Section", 15],
  ["thin", "Thin Lines", 18],
  ["closeViews", "Close Hidden", 23],
  ["switchViews", "Switch Windows", 11, true],
]

const tabs = [
  "Architecture",
  "Structure",
  "Steel",
  "Systems",
  "Insert",
  "Annotate",
  "Analyze",
  "Massing & Site",
  "Collaborate",
  "View",
  "Manage",
  "Add-Ins",
  "Enscape™",
  "Modify",
]

// icon, width, first line, second line, has a drop-down, disabled
const panels = [
  { title: "Select", menu: true, pad: 4, tools: [["modify", 29, "Modify"]] },
  {
    title: "Build",
    tools: [
      ["wall", 28, "Wall", "", true],
      ["door", 28, "Door"],
      ["window", 32, "Window"],
      ["component", 58, "Component", "", true],
      ["column", 43, "Column", "", true],
      ["roof", 33, "Roof", "", true],
      ["ceiling", 28, "Ceiling"],
      ["floor", 32, "Floor", "", true],
      ["curtainSystem", 32, "Curtain", "System"],
      ["curtainGrid", 30, "Curtain", "Grid"],
      ["mullion", 30, "Mullion"],
    ],
  },
  {
    title: "Circulation",
    pad: 3,
    tools: [
      ["railing", 36, "Railing", "", true],
      ["ramp", 28, "Ramp"],
      ["stair", 22, "Stair"],
    ],
  },
  {
    title: "Model",
    pad: 1,
    tools: [
      ["modelText", 27, "Model", "Text"],
      ["modelLine", 27, "Model", "Line"],
      ["modelGroup", 35, "Model", "Group", true],
    ],
  },
  {
    title: "Room & Area",
    menu: true,
    pad: 1,
    tools: [
      ["room", 27, "Room"],
      ["roomSeparator", 36, "Room", "Separator"],
      ["tagRoom", 37, "Tag", "Room", true],
      ["area", 29, "Area", "", true],
      ["areaBoundary", 37, "Area", "Boundary", false, true],
      ["tagArea", 31, "Tag", "Area", true],
    ],
  },
  {
    title: "Opening",
    tools: [
      ["byFace", 24, "By", "Face"],
      ["shaft", 26, "Shaft"],
      ["wallOpening", 26, "Wall"],
      ["vertical", 29, "Vertical"],
      ["dormer", 30, "Dormer"],
    ],
  },
  {
    title: "Datum",
    tools: [
      ["level", 24, "Level", "", false, true],
      ["grid", 26, "Grid"],
    ],
  },
  {
    title: "Work Plane",
    last: true,
    pad: 0,
    tools: [
      ["set", 27, "Set"],
      ["show", 25, "Show"],
      ["refPlane", 26, "Ref", "Plane"],
      ["viewer", 26, "Viewer"],
    ],
  },
]

const groups = [
  [
    "Graphics",
    [
      ["View Scale", "1 : 100", "select"],
      ["Scale Value    1:", "100", "dim"],
      ["Display Model", "Normal"],
      ["Detail Level", "Coarse"],
      ["Parts Visibility", "Show Original"],
      ["Visibility/Grap...", "Edit...", "button"],
      ["Graphic Displ...", "Edit...", "button"],
      ["Orientation", "Project North"],
      ["Wall Join Disp...", "Clean all wall j..."],
      ["Discipline", "Architectural"],
      ["Show Hidden ...", "By Discipline"],
      ["Color Scheme...", "Background"],
      ["Color Scheme", "<none>", "button"],
      ["System Color ...", "Edit...", "button"],
      ["Default Analy...", "None"],
      ["Sun Path", "", "check"],
    ],
  ],
  [
    "Underlay",
    [
      ["Range: Base L...", "None"],
      ["Range: Top Le...", "Unbounded", "dim"],
      ["Underlay Orie...", "Look down", "dim"],
    ],
  ],
  [
    "Extents",
    [
      ["Crop View", "", "check"],
      ["Crop Region ...", "", "check"],
      ["Annotation Cr...", "", "check"],
      ["View Range", "Edit...", "button"],
      ["Associated Le...", "Level 1", "dim"],
      ["Scope Box", "None"],
      ["Depth Clipping", "No clip", "button"],
    ],
  ],
  [
    "Identity Data",
    [
      ["View Template", "<None>", "button"],
      ["View Name", "Level 1"],
      ["Dependency", "Independent", "dim"],
      ["Title on Sheet", ""],
      ["Referencing S...", "", "dim"],
      ["Referencing D...", "", "dim"],
    ],
  ],
  [
    "Phasing",
    [
      ["Phase Filter", "Show All"],
      ["Phase", "New Construct..."],
    ],
  ],
]

// guides: "-" open node, "+" closed node, "|" line, "e" branch, "l" last branch
const tree = [
  ["-", "Views (all)", "views"],
  ["|-", "Floor Plans"],
  ["||e", "Level 1", null, true],
  ["||e", "Level 2"],
  ["||l", "Site"],
  ["|-", "Ceiling Plans"],
  ["||e", "Level 1"],
  ["||l", "Level 2"],
  ["|+", "3D Views"],
  ["|-", "Elevations (Building Elevation)"],
  ["| e", "East"],
  ["| e", "North"],
  ["| e", "South"],
  ["| l", "West"],
  ["e", "Legends", "legends"],
  ["e", "Schedules/Quantities (all)", "schedules"],
  ["e", "Sheets (all)", "sheets"],
  ["+", "Families", "families"],
  ["+", "Groups", "groups"],
  ["l", "Revit Links", "links"],
]

const controls = [
  ["detail", "Detail Level"],
  ["cube", "Visual Style"],
  ["sun", "Sun Path"],
  ["shadow", "Shadows"],
  ["crop", "Crop View"],
  ["cropRegion", "Show Crop Region"],
  ["glasses", "Temporary Hide"],
  ["bulb", "Reveal Hidden Elements"],
  ["temp", "Temporary View Properties"],
  ["analytic", "Analytical Model"],
  ["constraints", "Reveal Constraints"],
]

const columns = [
  ["A", 345.5],
  ["B", 433.5],
  ["C", 521.5],
  ["D", 608.5],
  ["E", 696.5],
  ["F", 784.5],
]
const rows = [
  ["2", 302],
  ["1", 459],
]

/* ---------- parts ---------- */

const Tool = ({ tool, active }) => {
  const [icon, width, first, second, menu, disabled] = tool
  return (
    <ToolButton $w={width} $active={active} $disabled={disabled} disabled={disabled}>
      <svg width="20" height="20" viewBox="0 0 20 20" aria-hidden="true">
        {ribbonIcons[icon]}
      </svg>
      <ToolLabel>{first}</ToolLabel>
      <SecondLine>
        {second}
        {menu && <Caret />}
      </SecondLine>
    </ToolButton>
  )
}

const Value = ({ name, value, kind }) => {
  if (kind === "button") return <CellButton aria-label={name}>{value}</CellButton>
  if (kind === "check") return <Check type="checkbox" aria-label={name} />
  if (kind === "select")
    return (
      <CellSelect aria-label={name}>
        <option>{value}</option>
      </CellSelect>
    )
  return value
}

const Properties = () => (
  <Side>
    <SideHeader>
      Properties
      <IconButton aria-label="Close properties">
        <Icon name="close" size={8} />
      </IconButton>
    </SideHeader>
    <TypeRow>
      <TypeThumb>
        <Icon name="planBig" size={23} />
      </TypeThumb>
      <TypeName>Floor Plan</TypeName>
      <Caret />
    </TypeRow>
    <InstanceRow>
      <Field $w={88}>
        <select aria-label="Instance">
          <option>Floor Plan: Level 1</option>
        </select>
        <Chevron color="#777" />
      </Field>
      <EditType>
        <Icon name="editType" size={12} />
        Edit Type
      </EditType>
    </InstanceRow>
    <PropsBody>
      <PropsTable>
        <colgroup>
          <Col $w={63} />
          <Col $w={62} />
          <Col $w={8} />
        </colgroup>
        {groups.map(([group, items]) => (
          <tbody key={group}>
            <Row>
              <GroupCell colSpan={3}>
                <GroupLine>
                  {group}
                  <svg width="6" height="8" viewBox="0 0 6 8" aria-hidden="true">
                    <path d="M1 4l2-2 2 2M1 7l2-2 2 2" fill="none" stroke="#222" />
                  </svg>
                </GroupLine>
              </GroupCell>
            </Row>
            {items.map(([name, value, kind]) => (
              <Row key={name} $dim={kind === "dim"}>
                <NameCell scope="row">{name}</NameCell>
                <ValueCell $flush={kind === "button" || kind === "select"}>
                  <Value name={name} value={value} kind={kind} />
                </ValueCell>
                <ValueCell />
              </Row>
            ))}
          </tbody>
        ))}
      </PropsTable>
      <VScroll>
        <Chevron dir="up" />
        <Gap $grow={1} />
        <VThumb $grow={138} />
        <Gap $grow={10} />
        <Chevron />
      </VScroll>
    </PropsBody>
    <SideFooter>
      <HelpLink href="#help">Properties help</HelpLink>
      <Apply disabled>Apply</Apply>
    </SideFooter>
  </Side>
)

const VThumb = styled(Thumb)`
  width: 100%;
`

const Bubble = ({ x, y, label }) => (
  <g>
    <circle cx={x} cy={y} r="12" fill="none" stroke="#333" strokeWidth=".9" />
    <text x={x} y={y + 4} fontSize="12" textAnchor="middle" fill="#222">
      {label}
    </text>
  </g>
)

const Plan = () => (
  <PlanSvg viewBox="148 129 979 535" preserveAspectRatio="xMidYMin meet" role="img" aria-label="Level 1 grid plan">
    <circle cx="321" cy="255" r="19.500" fill="#ffff00" />
    <g stroke="#b83cba" strokeWidth="1">
      {columns.map(([label, x]) => (
        <path key={label} d={`M${x} 257V509`} strokeDasharray="23 6 6 6.300" strokeDashoffset="10" />
      ))}
      {rows.map(([label, y]) => (
        <path key={label} d={`M301 ${y + 0.5}H849`} strokeDasharray="23 6 6 6.300" strokeDashoffset="8" />
      ))}
    </g>
    {columns.map(([label, x]) => (
      <React.Fragment key={label}>
        <Bubble x={x} y={244.5} label={label} />
        <Bubble x={x} y={520.5} label={label} />
      </React.Fragment>
    ))}
    {rows.map(([label, y]) => (
      <React.Fragment key={label}>
        <Bubble x={289.5} y={y + 0.5} label={label} />
        <Bubble x={860.5} y={y + 0.5} label={label} />
      </React.Fragment>
    ))}
    <path d="M1009.500 409.500l9-8.500v17z" fill="#000" />
    <circle cx="1027" cy="409.500" r="12" fill="#fff" stroke="#333" strokeWidth=".9" />
    <path d="M1005 410.500h2M1026 410.500h2" stroke="#222" />
    <path d="M321.500 255.500v11l2.500-2 2 4 1.800-1-2-3.600h3.400z" fill="#fff" stroke="#333" strokeWidth=".8" />
  </PlanSvg>
)

const Guide = ({ kind, under, expanded, onToggle, label }) => {
  const line = { stroke: "#a5a5a5", strokeDasharray: "1 1", fill: "none" }
  const art = (
    <svg width="13" height="12" viewBox="0 0 13 12" aria-hidden="true">
      {kind === "|" && <path d="M6.500 0v12" {...line} />}
      {kind === "e" && <path d="M6.500 0v12M6.500 6.500H13" {...line} />}
      {kind === "l" && <path d="M6.500 0v6.500H13" {...line} />}
      {(kind === "-" || kind === "+") && (
        <>
          <path d={`M6.500 ${under ? 0 : 9}v12M9 6.500h4`} {...line} />
          <rect x="4" y="4" width="5" height="5" fill="#fff" stroke="#8c8c8c" />
          <path d={expanded ? "M5 6.500h3" : "M5 6.500h3M6.500 5v3"} stroke="#444" />
        </>
      )}
    </svg>
  )
  if (kind === "-" || kind === "+")
    return (
      <IconButton $w={13} $h={12} aria-label={`Toggle ${label}`} onClick={onToggle}>
        {art}
      </IconButton>
    )
  return art
}

const ProjectBrowser = () => {
  const [closed, setClosed] = useState({})
  let hideBelow = null
  return (
    <Browser>
      <SideHeader>
        Project Browser - Project1
        <IconButton aria-label="Close project browser">
          <Icon name="close" size={8} />
        </IconButton>
      </SideHeader>
      <Tree>
        {tree.map(([guides, label, icon, bold], i) => {
          const depth = guides.length
          if (hideBelow !== null && depth > hideBelow) return null
          hideBelow = closed[i] ? depth : null
          return (
            <TreeRow key={i}>
              {guides.split("").map((kind, n) => (
                <Guide
                  key={n}
                  kind={kind}
                  under={i > 0}
                  expanded={kind === "-" && !closed[i]}
                  label={label}
                  onToggle={() => setClosed({ ...closed, [i]: !closed[i] })}
                />
              ))}
              {icon && (
                <TreeIcon>
                  <Icon name={icon} size={10} />
                </TreeIcon>
              )}
              <TreeLabel $bold={bold} $icon={!!icon}>
                {label}
              </TreeLabel>
            </TreeRow>
          )
        })}
      </Tree>
      <ControlBar>
        <HScroll>
          <Chevron dir="left" />
          <Gap $grow={2} />
          <Thumb $grow={116} />
          <Gap $grow={2} />
          <Chevron dir="right" />
        </HScroll>
      </ControlBar>
    </Browser>
  )
}

const LevelView = () => (
  <View>
    <ViewTabs>
      <ViewTab $active $w={85}>
        <Icon name="plan" size={11} />
        <TabName>Level 1</TabName>
        <IconButton aria-label="Close Level 1">
          <Icon name="close" size={8} />
        </IconButton>
      </ViewTab>
      <ViewTab $w={84}>
        <Icon name="houseGrey" size={11} />
        <TabName>{"{3D}"}</TabName>
      </ViewTab>
      <MenuCaret aria-label="Views">
        <Caret $size={3} />
      </MenuCaret>
    </ViewTabs>
    <ViewBody>
      <Canvas>
        <Plan />
        <NavBar>
          <NavDot aria-label="Close navigation bar" />
          <NavButton $grow={4} aria-label="2D steering wheel">
            <svg width="17" height="18" viewBox="0 0 16 16" aria-hidden="true">
              <circle cx="7" cy="7" r="6" fill="#e4e7ec" stroke="#8b929d" />
              <path d="M4 5h6v5H4z" fill="#fff" stroke="#8b929d" />
              <path d="M8 11h3v2H8v2h3M12 11v4h1c3 0 3-4 0-4z" fill="none" stroke="#3b7fb5" />
            </svg>
            <Caret />
          </NavButton>
          <NavButton $grow={3} aria-label="Zoom region">
            <svg width="12" height="12" viewBox="0 0 12 12" aria-hidden="true">
              <path d="M1 1h8v8H1z" fill="#8fc486" stroke="#6fa366" />
              <circle cx="8" cy="7" r="2.500" fill="#fff" stroke="#777" />
              <path d="M10 9l2 3" stroke="#777" />
            </svg>
            <Caret />
          </NavButton>
          <NavDot aria-label="Navigation options" />
        </NavBar>
      </Canvas>
      <VScroll $w={10} $pad={3}>
        <Chevron dir="up" />
        <Gap $grow={251} />
        <VThumb $grow={11} />
        <Gap $grow={252} />
        <Chevron />
      </VScroll>
      <VScroll $w={3} />
    </ViewBody>
    <ControlBar>
      <ScaleButton>1 : 100</ScaleButton>
      {controls.map(([icon, label]) => (
        <IconButton key={icon} $w={14} $h={12} aria-label={label}>
          <Icon name={icon} size={11} />
        </IconButton>
      ))}
      <HScroll>
        <Chevron dir="left" />
        <Gap $grow={371} />
        <Thumb $grow={11} />
        <Gap $grow={370} />
        <Chevron dir="right" />
      </HScroll>
      <IconButton $w={14} aria-label="Resize">
        <Icon name="grip" size={10} />
      </IconButton>
    </ControlBar>
  </View>
)

// name, width, drawing, running, active
const taskApps = [
  ["Start", 32, <path key="a" d="M2 3.500l5-.8v4.800H2zM8 2.500l6-1v6H8zM2 8.500h5v4.800l-5-.8zM8 8.500h6v6l-6-1z" fill="#fff" />],
  ["Search", 32, <circle key="a" cx="8" cy="8" r="6" fill="none" stroke="#fff" strokeWidth="1.800" />],
  ["Task View", 33, <path key="a" d="M2 5h8v6H2zM2 1v2h8V1M2 15v-2h8v2M13 1v3M13 6v4M13 12v3" fill="none" stroke="#fff" strokeWidth="1.200" />],
  [
    "Browser",
    33,
    <>
      <circle cx="8" cy="8" r="7.500" fill="#54b948" />
      <circle cx="8" cy="9" r="4" fill="none" stroke="#fff" strokeWidth="2" />
      <path d="M9 7l5-6 1 3z" fill="#f3a13b" stroke="#fff" strokeWidth=".7" />
    </>,
    true,
  ],
  [
    "Firefox",
    33,
    <>
      <circle cx="8" cy="8" r="7.300" fill="#f57c1f" />
      <circle cx="9" cy="6" r="4.500" fill="#2f56a6" />
      <path d="M1 3c3 0 3 3 6 3-3 2-1 5 2 5 4 0 5-4 4-8 3 4 3 9-1 11-6 4-13-2-11-11z" fill="#fba422" />
    </>,
  ],
  [
    "File Explorer",
    32,
    <>
      <path d="M0 2h6l2 2h8v11H0z" fill="#f8d775" />
      <path d="M3 8h10v7h-3v-3H6v3H3z" fill="#45a5dc" />
    </>,
    true,
  ],
  [
    "Monitor",
    33,
    <>
      <path d="M0 0h16v16H0z" fill="#16304f" />
      <path d="M2 12h2v2H2zM5 10h2v2H5zM8 12h2v2H8zM11 9h2v2h-2zM12 12h2v2h-2zM4 5h1v1H4zM8 7h2v2H8zM11 3h1v1h-1z" fill="#d9ecf7" />
    </>,
  ],
  [
    "Snipping Tool",
    32,
    <>
      <ellipse cx="7" cy="6" rx="7" ry="4.500" fill="#f0eaea" stroke="#c45858" transform="rotate(-15 7 6)" />
      <path d="M5 8l5-4" stroke="#c33" strokeWidth="1.200" />
      <circle cx="10" cy="13" r="2" fill="none" stroke="#5b9bd5" strokeWidth="1.300" />
      <circle cx="14" cy="11" r="1.800" fill="none" stroke="#5b9bd5" strokeWidth="1.300" />
    </>,
  ],
  [
    "Model",
    33,
    <>
      <path d="M0 0h16v16H0z" fill="#e3b4c6" />
      <path d="M2 16V7h2v9M6 16V3l3 2v11M11 16V6l3-4v14" fill="#4e4650" />
      <path d="M0 5h16M0 9h16" stroke="#efe3e8" strokeWidth=".8" />
    </>,
  ],
  [
    "Revit",
    32,
    <>
      <path d="M0 0h16v16H0z" fill="#f4f7fa" />
      <path d="M4 2h5c5 0 4 6 1 6.500L13 14h-3L7 9v5H4z" fill="#1f6fb2" />
      <path d="M7 4.500h2c1.500 0 1.500 2 0 2H7z" fill="#f4f7fa" />
    </>,
    true,
    true,
  ],
  [
    "Patterns",
    33,
    <>
      <path d="M0 0h16v16H0z" fill="#5c2a86" />
      <path d="M2 2h3v3H2zM7 2h3v3H7zM12 2h3v3h-3zM2 7h3v3H2zM7 7h3v3H7zM12 7h3v3h-3zM2 12h3v3H2zM7 12h3v3H7zM12 12h3v3h-3z" fill="none" stroke="#c9a5e6" />
    </>,
  ],
  [
    "Telegram",
    32,
    <>
      <circle cx="8" cy="8" r="7.500" fill="#2ba0da" />
      <path d="M3 8l9-4-2 9-3-2-1 1.500V9.500z" fill="#fff" />
    </>,
  ],
  [
    "Render",
    33,
    <>
      <rect width="16" height="16" rx="2" fill="#f6f6f6" />
      <path d="M7 2L2 9l5 5z" fill="#d6322b" />
      <path d="M8 2l6 8-2 4z" fill="#2f9a3b" />
      <path d="M5 13l4-4 2 5z" fill="#333" />
    </>,
  ],
]

const TaskIcon = ({ children, size = 16 }) => (
  <svg width={size} height={size} viewBox="0 0 16 16" aria-hidden="true">
    {children}
  </svg>
)

const App = () => (
  <Shell>
    <GlobalStyle />
    <TitleBar>
      <QuickAccess>
        {quick.map((item, i) =>
          item === null ? (
            <Rule key={i} />
          ) : (
            <React.Fragment key={i}>
              <QuickButton $w={item[2]} $on={item[0] === "thin"} aria-label={item[1]}>
                <Icon name={item[0]} size={12} />
              </QuickButton>
              {item[3] && (
                <QuickButton $w={9} aria-label={`${item[1]} options`}>
                  <Caret />
                </QuickButton>
              )}
            </React.Fragment>
          )
        )}
        <QuickButton $w={14} aria-label="Customize toolbar">
          <svg width="6" height="6" viewBox="0 0 6 6" aria-hidden="true">
            <path d="M0 .5h6" stroke="#333" />
            <path d="M0 2.500h6L3 5.500z" fill="#333" />
          </svg>
        </QuickButton>
      </QuickAccess>
      <DocTitle>Autodesk Revit 2019 - STUDENT VERSION - Project1 - Floor Plan: Level 1</DocTitle>
      <Account>
        <SideCaret />
        <Search placeholder="Type a keyword or phrase" aria-label="Search" />
        {["binoculars", "satellite", "star", "user"].map((name) => (
          <IconButton key={name} $w={16} $h={15} aria-label={name}>
            <Icon name={name} size={11} />
          </IconButton>
        ))}
        <SignIn href="#signin">Sign In</SignIn>
        <Caret />
        <IconButton $w={20} $h={15} aria-label="Store">
          <Icon name="cart" size={12} />
        </IconButton>
        <Rule />
        <IconButton $w={17} $h={15} aria-label="Help">
          <Icon name="help" size={12} />
        </IconButton>
        <Caret $after={9} />
        <IconButton $w={16} $h={15} aria-label="Minimize">
          <Icon name="minimize" size={10} />
        </IconButton>
        <IconButton $w={18} $h={15} aria-label="Restore">
          <Icon name="restore" size={10} />
        </IconButton>
        <IconButton $w={16} $h={15} aria-label="Close">
          <Icon name="close" size={11} />
        </IconButton>
      </Account>
    </TitleBar>
    <Tabs>
      <FileTab>File</FileTab>
      {tabs.map((name, i) => (
        <Tab key={name} $active={i === 0}>
          {name}
        </Tab>
      ))}
      <Tab aria-label="Minimize ribbon">
        <TabPill>
          <Caret />
        </TabPill>
        <Caret />
      </Tab>
    </Tabs>
    <Ribbon>
      {panels.map((panel) => (
        <Panel key={panel.title} $last={panel.last}>
          <PanelTools $pad={panel.pad}>
            {panel.tools.map((tool) => (
              <Tool key={tool[0]} tool={tool} active={tool[0] === "modify"} />
            ))}
          </PanelTools>
          <PanelTitle>
            {panel.title}
            {panel.menu && <Caret $size={3} />}
          </PanelTitle>
        </Panel>
      ))}
    </Ribbon>
    <OptionsBar />
    <Workspace>
      <Properties />
      <LevelView />
      <ProjectBrowser />
    </Workspace>
    <StatusBar>
      <span>Click to select, TAB for alternates, CTRL adds, SHIFT unselects.</span>
      <StatusGroup>
        <IconButton $w={20} $h={12} aria-label="Worksets">
          <Icon name="worksets" size={11} />
        </IconButton>
        <Field $w={136} $h={12} $bg="#fff" $line="#fff">
          <select aria-label="Active workset" />
          <Chevron color="#888" />
        </Field>
        <IconButton $w={20} $h={12} aria-label="Editing requests">
          <Icon name="editable" size={11} />
        </IconButton>
        <Count>:0</Count>
        <IconButton $w={15} $h={12} aria-label="Design options">
          <Icon name="options" size={11} />
        </IconButton>
        <IconButton $w={20} $h={12} aria-label="Add to set">
          <Icon name="addOption" size={11} />
        </IconButton>
        <Field $w={136} $h={12} $bg="#fff" $line="#fff" $muted>
          <select aria-label="Design option">
            <option>Main Model</option>
          </select>
          <Chevron color="#888" />
        </Field>
      </StatusGroup>
      <StatusGroup $gap={6} $end={43}>
        {["selLinks", "selUnderlay", "selPinned", "selFace", "drag", "ring"].map((name) => (
          <IconButton key={name} $w={11} $h={12} aria-label={name}>
            <Icon name={name} size={11} />
          </IconButton>
        ))}
        <StatusGroup>
          <Icon name="filter" size={11} />
          :0
        </StatusGroup>
      </StatusGroup>
    </StatusBar>
    <TaskBar>
      <Apps>
        {taskApps.map(([name, width, art, run, on], i) => (
          <AppButton key={name} $w={width} $run={run} $on={on} aria-label={name}>
            <TaskIcon size={i < 3 ? 13 : 16}>{art}</TaskIcon>
          </AppButton>
        ))}
      </Apps>
      <Tray>
        <TrayButton $w={24} aria-label="People">
          <TaskIcon size={12}>
            <g fill="none" stroke="#fff" strokeWidth="1.300">
              <circle cx="5" cy="7" r="2.200" />
              <circle cx="11" cy="4" r="2.600" />
              <path d="M1 14c0-6 8-6 8 0M8 9c3-3 7-1 7 3" />
            </g>
          </TaskIcon>
        </TrayButton>
        <TrayButton $w={22} aria-label="Show hidden icons">
          <TaskIcon size={10}>
            <path d="M2 11l6-6 6 6" fill="none" stroke="#fff" strokeWidth="1.600" />
          </TaskIcon>
        </TrayButton>
        <TrayButton $w={14} aria-label="Network">
          <TaskIcon size={10}>
            <path d="M1 15C1 7 7 1 15 1M5 15c0-6 4-10 10-10M9 15c0-3 3-6 6-6" fill="none" stroke="#ddd" strokeWidth="1.500" />
            <circle cx="13.500" cy="13.500" r="1.800" fill="#fff" />
          </TaskIcon>
        </TrayButton>
        <TrayButton $w={16} aria-label="Volume">
          <TaskIcon size={11}>
            <path d="M1 6h3l4-4v12l-4-4H1zM10 5c2 2 2 4 0 6M12 3c3 3 3 7 0 10" fill="none" stroke="#fff" strokeWidth="1.200" />
          </TaskIcon>
        </TrayButton>
        <TrayButton $w={24} aria-label="Language">
          ENG
        </TrayButton>
        <Clock>
          11:09 PM
          <br />
          22-Jan-19
        </Clock>
        <TrayButton $w={30} aria-label="Notifications">
          <TaskIcon size={17}>
            <path d="M1 1h11v9H7l-3 3v-3H1z" fill="#fff" />
            <path d="M3 4h7M3 6.500h7" stroke="#050a12" />
            <circle cx="11.500" cy="11" r="4.500" fill="#2a3038" stroke="#8a9099" strokeWidth=".7" />
            <text x="11.500" y="13.500" fontSize="7" textAnchor="middle" fill="#fff">
              2
            </text>
          </TaskIcon>
        </TrayButton>
        <Peek />
      </Tray>
    </TaskBar>
  </Shell>
)

export default App
